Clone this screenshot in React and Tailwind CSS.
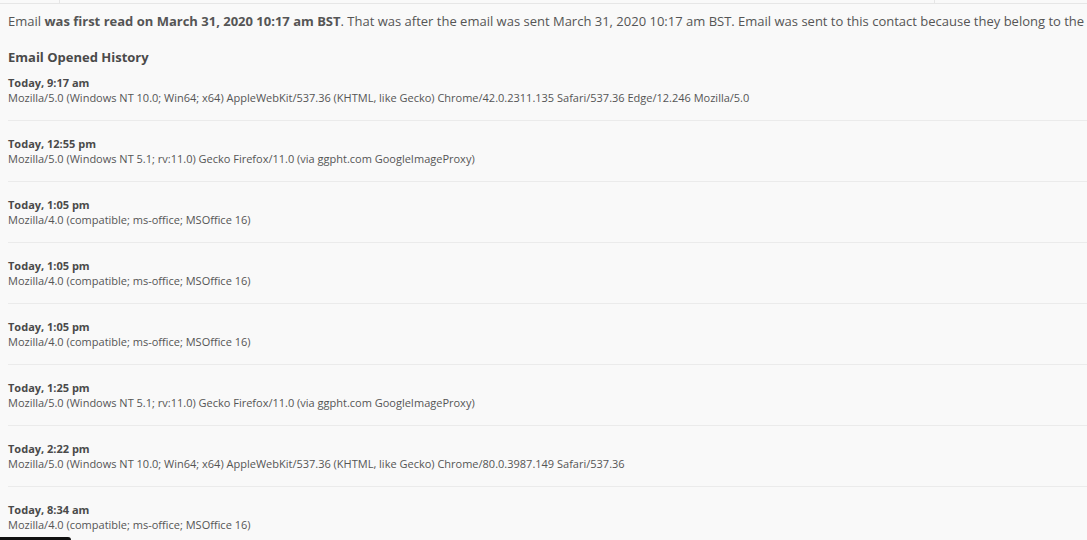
import React from 'react';

const history = [
  { time: 'Today, 9:17 am', agent: 'Mozilla/5.0 (Windows NT 10.0; Win64; x64) AppleWebKit/537.36 (KHTML, like Gecko) Chrome/42.0.2311.135 Safari/537.36 Edge/12.246 Mozilla/5.0' },
  { time: 'Today, 12:55 pm', agent: 'Mozilla/5.0 (Windows NT 5.1; rv:11.0) Gecko Firefox/11.0 (via ggpht.com GoogleImageProxy)' },
  { time: 'Today, 1:05 pm', agent: 'Mozilla/4.0 (compatible; ms-office; MSOffice 16)' },
  { time: 'Today, 1:05 pm', agent: 'Mozilla/4.0 (compatible; ms-office; MSOffice 16)' },
  { time: 'Today, 1:05 pm', agent: 'Mozilla/4.0 (compatible; ms-office; MSOffice 16)' },
  { time: 'Today, 1:25 pm', agent: 'Mozilla/5.0 (Windows NT 5.1; rv:11.0) Gecko Firefox/11.0 (via ggpht.com GoogleImageProxy)' },
  { time: 'Today, 2:22 pm', agent: 'Mozilla/5.0 (Windows NT 10.0; Win64; x64) AppleWebKit/537.36 (KHTML, like Gecko) Chrome/80.0.3987.149 Safari/537.36' },
  { time: 'Today, 8:34 am', agent: 'Mozilla/4.0 (compatible; ms-office; MSOffice 16)' },
];

export default function App() {
  return (
    <div className="relative h-[540px] w-[1087px] overflow-hidden bg-[#f9f9f9] text-[#555] font-['Open_Sans',sans-serif]">
      {/* cut-off table row above */}
      <div className="flex h-[4px] border-b border-[#e6e6e6]">
        <div className="w-[60px] border-r border-[#e6e6e6]"></div>
        <div className="w-[875px] border-r border-[#e6e6e6]"></div>
        <div className="flex-1"></div>
      </div>

      <p className="mt-[8px] px-2 text-[13px] leading-[18px] whitespace-nowrap">
        Email <b className="font-bold">was first read on March 31, 2020 10:17 am BST</b>. That was after the email was sent March 31, 2020 10:17 am BST. Email was sent to this contact because they belong to the
      </p>

      <h4 className="mt-[18px] px-2 text-[13px] leading-[18px] font-bold text-[#4a4a4a]">Email Opened History</h4>

      <div className="mt-[9px] pl-2">
        {history.map((h, i) => (
          <div key={i} className={`pb-[14px] border-b border-[#ebebeb] ${i > 0 ? 'pt-[15px]' : ''}`}>
            <div className="text-[11px] leading-[15px] font-bold text-[#4a4a4a]">{h.time}</div>
            <div className="text-[11px] leading-[16px] whitespace-nowrap">{h.agent}</div>
          </div>
        ))}
      </div>

      <div className="absolute bottom-0 left-0 h-[3px] w-[71px] rounded-tr-[3px] bg-[#111]"></div>
    </div>
  );
}
